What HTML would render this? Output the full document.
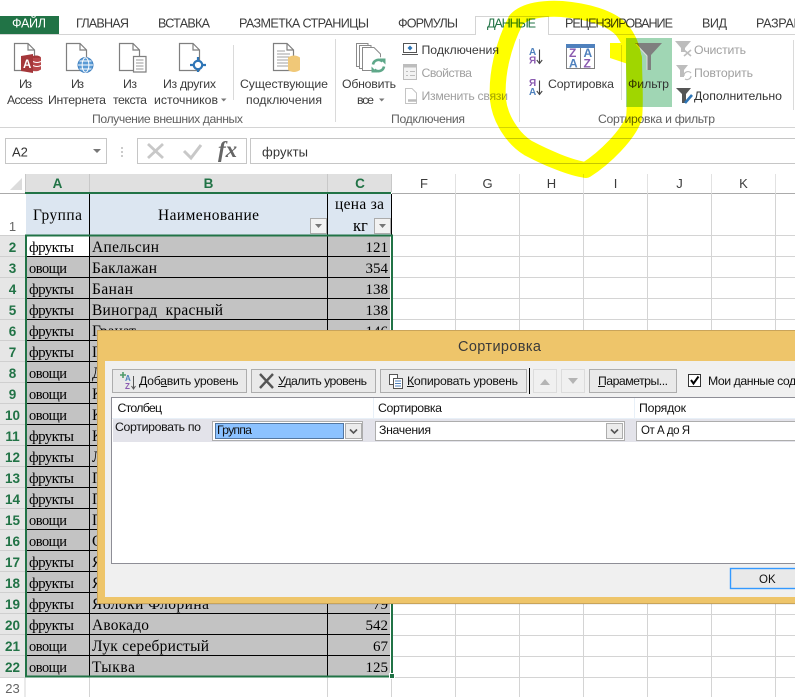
<!DOCTYPE html>
<html><head><meta charset="utf-8"><style>
html,body{margin:0;padding:0;background:#fff;width:795px;height:697px;overflow:hidden}
svg{display:block}
text{font-family:"Liberation Sans","Noto Sans CJK SC",sans-serif;font-size:12.3px;fill:#3c3c3c;white-space:pre}
.s text,text.s{font-family:"Liberation Serif","Noto Serif CJK SC",serif;font-size:15.4px;fill:#000}
.s text.n{font-size:15px}
.s text.o{font-size:14.4px}
.t{font-size:12.6px;fill:#3c3c3c}
.g{fill:#a0a0a0}
.gl{font-size:12.2px;fill:#606060}
.rh{font-size:13.5px;font-weight:bold;fill:#217346;text-anchor:middle}
.d{fill:#111;font-size:12.3px}
</style></head><body>
<svg width="795" height="697" viewBox="0 0 795 697" xmlns="http://www.w3.org/2000/svg">
<rect width="795" height="697" fill="#fff"/>
<!-- tabs -->
<rect x="0" y="16" width="59" height="19" fill="#217346"/>
<path d="M0 34.5H475.5V16.5H548.5V34.5H795" fill="none" stroke="#d4d4d4"/>
<text x="12" y="27.5" class="t" style="fill:#fff" textLength="34">ФАЙЛ</text>
<text x="76" y="27.5" class="t" textLength="53">ГЛАВНАЯ</text>
<text x="158" y="27.5" class="t" textLength="52">ВСТАВКА</text>
<text x="239" y="27.5" class="t" textLength="130">РАЗМЕТКА СТРАНИЦЫ</text>
<text x="398" y="27.5" class="t" textLength="60">ФОРМУЛЫ</text>
<text x="487" y="27.5" class="t" style="fill:#217346" textLength="49">ДАННЫЕ</text>
<text x="565" y="27.5" class="t" textLength="108">РЕЦЕНЗИРОВАНИЕ</text>
<text x="702" y="27.5" class="t" textLength="25">ВИД</text>
<text x="756" y="27.5" class="t" textLength="86">РАЗРАБОТЧИК</text>
<!-- ribbon lines -->
<path d="M0 127.5H795" stroke="#d4d4d4"/>
<path d="M233.5 45V100M335.5 39V122M519.5 39V122M621.5 45V100M793.5 40V110" stroke="#dadada"/>
<!-- doc icons -->
<g fill="#fff" stroke="#7f7f7f" stroke-width="1.2">
<path d="M14.5 43.5H28L34.5 50V70.5H14.5Z"/><path d="M28 43.5V50H34.5" fill="none"/>
<path d="M66.5 43.5H80L86.5 50V70.5H66.5Z"/><path d="M80 43.5V50H86.5" fill="none"/>
<path d="M119.5 43.5H133L139.5 50V70.5H119.5Z"/><path d="M133 43.5V50H139.5" fill="none"/>
<path d="M179.5 43.5H193L199.5 50V70.5H179.5Z"/><path d="M193 43.5V50H199.5" fill="none"/>
<path d="M273.5 43.5H287L293.5 50V70.5H273.5Z"/><path d="M287 43.5V50H293.5" fill="none"/>
<path d="M133.5 56.5H146V72H133.5Z"/>
</g>
<path d="M136 60H143.5M136 63H143.5M136 66H143.5M136 69H143.5" stroke="#9a9a9a"/>
<!-- access -->
<ellipse cx="36" cy="58" rx="5" ry="2.5" fill="#a4373a"/><path d="M31 58H41V69.5Q36 73 31 69.5Z" fill="#b8474a"/>
<path d="M33 61.5Q37 63.5 41 61.5M33 65.5Q37 67.5 41 65.5" stroke="#fff" fill="none"/>
<path d="M21 56L33 54V73L21 71Z" fill="#a4373a"/>
<text x="23" y="68" style="font-size:11.5px;font-weight:bold;fill:#fff">A</text>
<!-- globe -->
<circle cx="85.5" cy="65" r="7.5" fill="#5b9bd5" stroke="#3f7fbf"/>
<path d="M78 65H93M79.5 61H91.5M79.5 69H91.5" stroke="#fff"/><ellipse cx="85.5" cy="65" rx="3.4" ry="7.2" fill="none" stroke="#fff"/>
<!-- target -->
<circle cx="198" cy="65" r="4.2" fill="#fff" stroke="#2e75b6" stroke-width="2.2"/>
<path d="M190 65H193.5M202.5 65H206M198 57V60.5M198 69.5V72" stroke="#2e75b6" stroke-width="2.2"/>
<!-- existing -->
<path d="M277 51H285M277 54H290M277 57H290M277 60H288M277 63H288M277 66H288" stroke="#a0a0a0"/>
<path d="M288 57.5Q294 53.5 300 57.5V70Q294 74 288 70Z" fill="#f0c878"/>
<!-- refresh -->
<g fill="#fff" stroke="#8a8a8a" stroke-width="1">
<path d="M356.5 43.5H368V66.5H356.5Z"/><path d="M359.5 45.5H371V68.5H359.5Z"/><path d="M362.5 47.5H374L380.5 54V70.5H362.5Z"/>
</g>
<circle cx="378.5" cy="65.5" r="8.5" fill="#fff"/>
<path d="M373 64.5A5.6 5.6 0 0 1 382.5 61.5M384 66.5A5.6 5.6 0 0 1 374.5 69.5" fill="none" stroke="#5fa88a" stroke-width="2.6"/>
<path d="M379.5 58.5H385.5V64.5ZM377.5 72.5H371.5V66.5Z" fill="#5fa88a"/>
<!-- ribbon labels -->
<text x="19" y="88" textLength="13">Из</text>
<text x="7" y="104" textLength="36">Access</text>
<text x="71" y="88" textLength="13">Из</text>
<text x="48" y="104" textLength="58">Интернета</text>
<text x="123" y="88" textLength="14">Из</text>
<text x="113" y="104" textLength="34">текста</text>
<text x="163" y="88" textLength="53">Из других</text>
<text x="154" y="104" textLength="64">источников</text>
<path d="M221 98.5H226.5L223.7 101.5Z" fill="#777"/>
<text x="240" y="88" textLength="88">Существующие</text>
<text x="246" y="104" textLength="76">подключения</text>
<text x="342" y="88" textLength="54">Обновить</text>
<text x="357" y="104" textLength="17">все</text>
<path d="M379 98.5H384.5L381.7 101.5Z" fill="#777"/>
<text x="92" y="123" class="gl" textLength="151">Получение внешних данных</text>
<text x="391" y="123" class="gl" textLength="74">Подключения</text>
<text x="598" y="123" class="gl" textLength="117">Сортировка и фильтр</text>
<text x="421.5" y="54" textLength="77.5">Подключения</text>
<text x="421.5" y="77" class="g" textLength="50.5">Свойства</text>
<text x="421.5" y="100" class="g" textLength="86.5">Изменить связи</text>
<!-- small conn icons -->
<rect x="403.5" y="43.5" width="13" height="9" fill="#fff" stroke="#555"/><path d="M410 45.5L412.5 48L410 50.5L407.5 48Z" fill="#2e75b6"/><path d="M402 54.5H418" stroke="#555"/>
<rect x="403.5" y="64.5" width="13" height="15" fill="#f3f3f3" stroke="#bdbdbd"/><rect x="403.5" y="64.5" width="13" height="3" fill="#bdbdbd"/><path d="M406 71.5H408M410 71.5H415M406 75.5H408M410 75.5H415" stroke="#bdbdbd"/>
<path d="M405.5 88.5H412L416.5 93V103.5H405.5Z" fill="#fff" stroke="#c4c4c4"/><path d="M408 100.5H417" stroke="#bcbcbc" stroke-width="2.5"/>
<!-- sort icons -->
<text x="529" y="55" style="font-size:10px;font-weight:bold;fill:#4f81bd">А</text>
<text x="529" y="63.5" style="font-size:10px;font-weight:bold;fill:#8a5bb0">Я</text>
<text x="529" y="86" style="font-size:10px;font-weight:bold;fill:#8a5bb0">Я</text>
<text x="529" y="95" style="font-size:10px;font-weight:bold;fill:#4f81bd">А</text>
<path d="M539.5 49.5V63M536.8 60L539.5 63.5L542.2 60M539.5 80.5V94M536.8 91L539.5 94.5L542.2 91" fill="none" stroke="#444" stroke-width="1.1"/>
<rect x="566.5" y="44.5" width="28" height="24" fill="#fff" stroke="#7f7f7f"/>
<rect x="566" y="44" width="29" height="4" fill="#4f81bd"/>
<path d="M580.5 48V68" stroke="#7f7f7f"/>
<text x="569" y="57" style="font-size:12px;font-weight:bold;fill:#8a5bb0">Z</text>
<text x="569" y="67.5" style="font-size:12px;font-weight:bold;fill:#4f81bd">A</text>
<text x="583.5" y="57" style="font-size:12px;font-weight:bold;fill:#4f81bd">A</text>
<text x="583.5" y="67.5" style="font-size:12px;font-weight:bold;fill:#8a5bb0">Z</text>
<text x="548" y="88" textLength="66">Сортировка</text>
<!-- filter -->
<rect x="626" y="38" width="46" height="69" fill="#a0d6b4"/>
<path d="M635 43H662L651 55V70H647V55Z" fill="#7f7f7f"/>
<path d="M636 44L647 56V70" fill="none" stroke="#dcdcdc" stroke-width="1"/>
<text x="628" y="88" style="fill:#333" textLength="41">Фильтр</text>
<path d="M675 41H691L685 48V52H681V48Z" fill="#bdbdbd"/><path d="M684 50L691 56M691 50L684 56" stroke="#bdbdbd" stroke-width="1.6"/>
<path d="M676 65H688L684 70V77H680V70Z" fill="#bdbdbd"/><path d="M684 76A4 4 0 0 1 691 73M691 76A4 4 0 0 1 685 79" fill="none" stroke="#bdbdbd" stroke-width="1.2"/>
<path d="M676 88H691L686 94V103H682V94Z" fill="#555"/><path d="M685 103L692 95" stroke="#2e75b6" stroke-width="2.6"/>
<text x="694" y="54" class="g" textLength="52">Очистить</text>
<text x="694" y="77" class="g" textLength="59">Повторить</text>
<text x="694" y="100" style="fill:#333" textLength="88">Дополнительно</text>
<!-- formula bar -->
<rect x="5.5" y="138.5" width="101" height="25" fill="#fff" stroke="#c6c6c6"/>
<text x="12" y="156.5" style="font-size:13px;fill:#333">A2</text>
<path d="M93 149H101L97 153Z" fill="#777"/>
<path d="M122 147V149M122 151V153M122 155V157" stroke="#b5b5b5" stroke-width="1.4"/>
<rect x="137.5" y="138.5" width="109" height="25" fill="#fff" stroke="#c6c6c6"/>
<rect x="250.5" y="138.5" width="560" height="25" fill="#fff" stroke="#c6c6c6"/>
<path d="M148 144L163 158M163 144L148 158" stroke="#c8c8c8" stroke-width="2.8"/>
<path d="M184 151L191 158L201 145" fill="none" stroke="#c8c8c8" stroke-width="3"/>
<text x="218" y="157" style="font-family:'Liberation Serif',serif;font-size:23px;font-style:italic;font-weight:bold;fill:#666">fx</text>
<text x="262" y="156.5" style="font-size:13px;fill:#333" textLength="46">фрукты</text>
<!-- headers -->
<path d="M22 178V190H10Z" fill="#dcdcdc"/>
<rect x="25" y="174" width="366" height="19" fill="#e0e0e0"/>
<path d="M89.5 174V192M327.5 174V192M391.5 174V192M25.5 174V192" stroke="#c8c8c8"/>
<path d="M455.5 174V193M519.5 174V193M583.5 174V193M647.5 174V193M711.5 174V193M775.5 174V193" stroke="#e2e2e2"/>
<path d="M0 193.5H25M392 193.5H795" stroke="#ababab"/>
<rect x="25" y="192" width="366" height="2" fill="#217346"/>
<g>
<text x="57.5" y="188" style="font-size:13.5px;font-weight:bold;fill:#217346;text-anchor:middle">A</text>
<text x="208.5" y="188" style="font-size:13.5px;font-weight:bold;fill:#217346;text-anchor:middle">B</text>
<text x="360" y="188" style="font-size:13.5px;font-weight:bold;fill:#217346;text-anchor:middle">C</text>
<text x="424" y="188" style="font-size:13px;text-anchor:middle">F</text>
<text x="487.5" y="188" style="font-size:13px;text-anchor:middle">G</text>
<text x="551.5" y="188" style="font-size:13px;text-anchor:middle">H</text>
<text x="615.5" y="188" style="font-size:13px;text-anchor:middle">I</text>
<text x="679.5" y="188" style="font-size:13px;text-anchor:middle">J</text>
<text x="743.5" y="188" style="font-size:13px;text-anchor:middle">K</text>
</g>
<!-- grid right -->
<path d="M455.5 193V697M519.5 193V697M583.5 193V697M647.5 193V697M711.5 193V697M775.5 193V697" stroke="#d4d4d4"/>
<path d="M392 235.5H795M392 256.5H795M392 277.5H795M392 298.5H795M392 319.5H795M392 614.5H795M392 635.5H795M392 656.5H795M392 677.5H795" stroke="#d4d4d4"/>
<path d="M25 677.5V697M89.5 677V697M327.5 677V697M391.5 677V697" stroke="#d4d4d4"/>
<path d="M0 677.5H25" stroke="#d4d4d4"/>
<!-- row headers -->
<rect x="0" y="235" width="25" height="442" fill="#e6e6e6"/>
<path d="M0 235.5H25M0 256.5H25M0 277.5H25M0 298.5H25M0 319.5H25M0 340.5H25M0 361.5H25M0 382.5H25M0 403.5H25M0 424.5H25M0 445.5H25M0 466.5H25M0 487.5H25M0 508.5H25M0 529.5H25M0 550.5H25M0 571.5H25M0 592.5H25M0 613.5H25M0 634.5H25M0 655.5H25" stroke="#cfcfcf"/>
<text x="12.5" y="231" style="font-size:13px;fill:#666;text-anchor:middle">1</text>
<text x="12.5" y="252" class="rh">2</text><text x="12.5" y="273" class="rh">3</text><text x="12.5" y="294" class="rh">4</text><text x="12.5" y="315" class="rh">5</text><text x="12.5" y="336" class="rh">6</text><text x="12.5" y="357" class="rh">7</text><text x="12.5" y="378" class="rh">8</text><text x="12.5" y="399" class="rh">9</text><text x="12.5" y="420" class="rh">10</text><text x="12.5" y="441" class="rh">11</text><text x="12.5" y="462" class="rh">12</text><text x="12.5" y="483" class="rh">13</text><text x="12.5" y="504" class="rh">14</text><text x="12.5" y="525" class="rh">15</text><text x="12.5" y="546" class="rh">16</text><text x="12.5" y="567" class="rh">17</text><text x="12.5" y="588" class="rh">18</text><text x="12.5" y="609" class="rh">19</text><text x="12.5" y="630" class="rh">20</text><text x="12.5" y="651" class="rh">21</text><text x="12.5" y="672" class="rh">22</text>
<text x="12.5" y="693" style="font-size:13px;fill:#666;text-anchor:middle">23</text>
<!-- header row 1 -->
<rect x="26" y="194" width="365" height="41" fill="#dce6f1"/>
<path d="M89.5 194V235M327.5 194V235M391.5 194V235" stroke="#000"/>
<g class="s">
<text x="33" y="220" textLength="49">Группа</text>
<text x="158" y="220" textLength="101">Наименование</text>
<text x="335" y="209" textLength="49">цена за</text>
<text x="353" y="231" style="font-size:16.5px">кг</text>
</g>
<rect x="310.5" y="218.5" width="16" height="15" fill="#f2f2f2" stroke="#ababab"/><path d="M315 224H322L318.5 228Z" fill="#777"/>
<rect x="374.5" y="218.5" width="16" height="15" fill="#f2f2f2" stroke="#ababab"/><path d="M379 224H386L382.5 228Z" fill="#777"/>
<!-- data -->
<rect x="27" y="236" width="363" height="440" fill="#c3c3c3"/>
<rect x="27" y="236" width="62" height="20" fill="#fff"/>
<path d="M27 256.5H390M27 277.5H390M27 298.5H390M27 319.5H390M27 340.5H390M27 361.5H390M27 382.5H390M27 403.5H390M27 424.5H390M27 445.5H390M27 466.5H390M27 487.5H390M27 508.5H390M27 529.5H390M27 550.5H390M27 571.5H390M27 592.5H390M27 613.5H390M27 634.5H390M27 655.5H390M89.5 236V676M327.5 236V676" stroke="#000"/>
<g class="s">
<text x="29" y="252" class="n" textLength="45">фрукты</text><text x="92" y="252" textLength="67">Апельсин</text><text x="388" y="252" text-anchor="end" class="n">121</text>
<text x="29" y="273" class="o" textLength="38">овощи</text><text x="92" y="273" textLength="65">Баклажан</text><text x="388" y="273" text-anchor="end" class="n">354</text>
<text x="29" y="294" class="n" textLength="45">фрукты</text><text x="92" y="294" textLength="41">Банан</text><text x="388" y="294" text-anchor="end" class="n">138</text>
<text x="29" y="315" class="n" textLength="45">фрукты</text><text x="92" y="315" textLength="131">Виноград  красный</text><text x="388" y="315" text-anchor="end" class="n">138</text>
<text x="29" y="336" class="n" textLength="45">фрукты</text><text x="92" y="336">Гранат</text><text x="388" y="336" text-anchor="end" class="n">146</text>
<text x="29" y="357" class="n" textLength="45">фрукты</text><text x="92" y="357">Груша</text>
<text x="29" y="378" class="o" textLength="38">овощи</text><text x="92" y="378">Дайкон</text>
<text x="29" y="399" class="o" textLength="38">овощи</text><text x="92" y="399">Капуста</text>
<text x="29" y="420" class="o" textLength="38">овощи</text><text x="92" y="420">Картофель</text>
<text x="29" y="441" class="n" textLength="45">фрукты</text><text x="92" y="441">Киви</text>
<text x="29" y="462" class="n" textLength="45">фрукты</text><text x="92" y="462">Лимон</text>
<text x="29" y="483" class="n" textLength="45">фрукты</text><text x="92" y="483">Персик</text>
<text x="29" y="504" class="n" textLength="45">фрукты</text><text x="92" y="504">Персик</text>
<text x="29" y="525" class="o" textLength="38">овощи</text><text x="92" y="525">Помидор</text>
<text x="29" y="546" class="o" textLength="38">овощи</text><text x="92" y="546">Свекла</text>
<text x="29" y="567" class="n" textLength="45">фрукты</text><text x="92" y="567">Яблоки</text>
<text x="29" y="588" class="n" textLength="45">фрукты</text><text x="92" y="588">Яблоки</text>
<text x="29" y="609" class="n" textLength="45">фрукты</text><text x="92" y="609" textLength="117">Яблоки Флорина</text><text x="388" y="609" text-anchor="end" class="n">79</text>
<text x="29" y="630" class="n" textLength="45">фрукты</text><text x="92" y="630" textLength="57">Авокадо</text><text x="388" y="630" text-anchor="end" class="n">542</text>
<text x="29" y="651" class="o" textLength="38">овощи</text><text x="92" y="651" textLength="117">Лук серебристый</text><text x="388" y="651" text-anchor="end" class="n">67</text>
<text x="29" y="672" class="o" textLength="38">овощи</text><text x="92" y="672" textLength="43">Тыква</text><text x="388" y="672" text-anchor="end" class="n">125</text>
</g>
<!-- selection -->
<rect x="26" y="235.5" width="366" height="441" fill="none" stroke="#217346" stroke-width="2"/>
<rect x="389.5" y="673.5" width="5" height="5" fill="#217346" stroke="#fff"/>
<!-- dialog -->
<rect x="97" y="331" width="720" height="274" fill="#000" opacity=".06"/>
<rect x="97.5" y="330.5" width="720" height="273" fill="#eec56a" stroke="#c9a45a"/>
<text x="458" y="351" style="font-size:14.5px;fill:#3a3a3a" textLength="83">Сортировка</text>
<rect x="105" y="361" width="700" height="236" fill="#f0f0f0"/>
<g fill="#e9e9e9" stroke="#adadad">
<rect x="112.5" y="369.5" width="134" height="23"/>
<rect x="251.5" y="369.5" width="124" height="23"/>
<rect x="380.5" y="369.5" width="146" height="23"/>
<rect x="589.5" y="369.5" width="87" height="23"/>
</g>
<g fill="#f0f0f0" stroke="#dcdcdc">
<rect x="533.5" y="369.5" width="23" height="23"/>
<rect x="561.5" y="369.5" width="23" height="23"/>
</g>
<path d="M529.5 368V394" stroke="#000"/>
<path d="M540 385H550L545 379ZM568 378H578L573 384Z" fill="#b4b4b4"/>
<!-- button icons -->
<path d="M120 375H126M123 372V378" stroke="#4f9a6a" stroke-width="1.6"/>
<text x="125" y="381" style="font-size:8px;font-weight:bold;fill:#4f81bd">A</text>
<text x="125" y="389" style="font-size:8px;font-weight:bold;fill:#8a5bb0">Z</text>
<path d="M133.5 376V388M131.5 386L133.5 389L135.5 386" fill="none" stroke="#555"/>
<path d="M260 374L273 388M273 374L260 388" stroke="#555" stroke-width="2.4"/>
<rect x="389.5" y="374.5" width="8" height="10" fill="#fff" stroke="#555"/>
<rect x="393.5" y="378.5" width="9" height="10" fill="#fff" stroke="#555"/>
<path d="M395 381H401M395 383.5H401M395 386H401" stroke="#4f81bd"/>
<g class="d">
<text x="139" y="385" class="d" textLength="99.5">Добавить уровень</text>
<text x="278" y="385" class="d" textLength="89">Удалить уровень</text>
<text x="407" y="385" class="d" textLength="111">Копировать уровень</text>
<text x="598" y="385" class="d" textLength="70">Параметры...</text>
</g>
<path d="M161 386.5H167M278 386.5H285M407 386.5H414M598 386.5H605" stroke="#1a1a1a"/>
<rect x="688.5" y="374.5" width="12" height="12" fill="#fff" stroke="#333"/>
<path d="M691 380L693.5 383.5L698.5 376.5" fill="none" stroke="#000" stroke-width="2"/>
<text x="708" y="385" class="d" textLength="120">Мои данные содержат</text>
<!-- list -->
<rect x="111.5" y="397.5" width="700" height="166" fill="#fff" stroke="#8e8e96"/>
<path d="M373.5 398V418M634.5 398V418" stroke="#e8f0f8"/>
<path d="M112 418.5H795" stroke="#e8f0f8"/>
<text x="117.5" y="412" class="d" textLength="44.5">Столбец</text>
<text x="378" y="412" class="d" textLength="64">Сортировка</text>
<text x="639" y="412" class="d" textLength="47">Порядок</text>
<rect x="113" y="419" width="690" height="23" fill="#e3e3ea"/>
<text x="115" y="431" class="d" textLength="86">Сортировать по</text>
<rect x="212.5" y="421.5" width="150" height="19" fill="#fff" stroke="#adadad"/>
<rect x="215" y="423" width="129" height="16" fill="#8cc2ff"/>
<rect x="215.5" y="423.5" width="128" height="15" fill="none" stroke="#1a2a40" stroke-dasharray="1 1"/>
<rect x="345.5" y="423.5" width="16" height="15" fill="#ececec" stroke="#adadad"/>
<path d="M350 429.5L353.5 433L357 429.5" fill="none" stroke="#555" stroke-width="1.6"/>
<text x="217" y="434" class="d" textLength="35">Группа</text>
<rect x="375.5" y="421.5" width="249" height="19" fill="#fff" stroke="#adadad"/>
<rect x="606.5" y="423.5" width="16" height="15" fill="#ececec" stroke="#adadad"/>
<path d="M611 429.5L614.5 433L618 429.5" fill="none" stroke="#555" stroke-width="1.6"/>
<text x="379" y="434" class="d" textLength="52">Значения</text>
<rect x="636.5" y="421.5" width="200" height="19" fill="#fff" stroke="#adadad"/>
<text x="641" y="434" style="font-size:11.5px;fill:#111" textLength="49">От А до Я</text>
<!-- ok -->
<rect x="730.5" y="568.5" width="80" height="20" fill="#e9e9e9" stroke="#3399ff" stroke-width="1.4"/>
<text x="759" y="583" style="font-size:11.5px;fill:#111">OK</text>
<!-- highlighter -->
<g style="mix-blend-mode:multiply">
<path d="M634 58C634 80 636 100 634 118C628 135 605 158 586 170C570 168 545 157 528 148C512 138 500 118 498 100C496 75 503 45 516 20C525 10 545 8 562 9C585 11 610 17 622 30C628 38 632 46 634 60Z" fill="none" stroke="#ffff00" stroke-width="16" stroke-linejoin="round"/>
<path d="M610 43L630 43L634 66L610 58Z" fill="#ffff00"/>
</g>
</svg>
</body></html>
